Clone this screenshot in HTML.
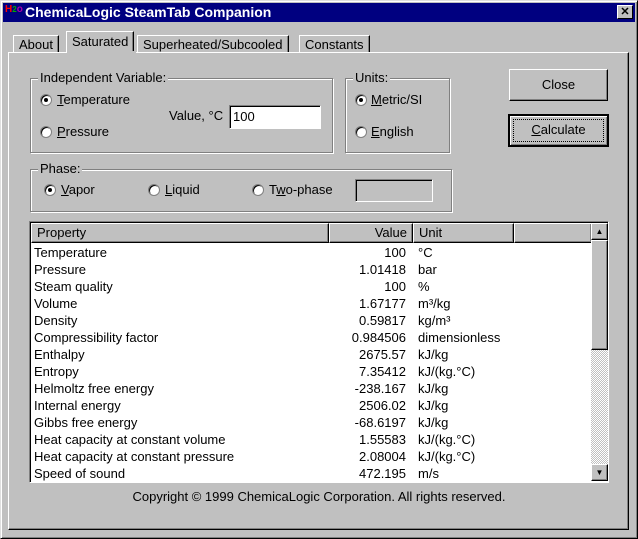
<!DOCTYPE html><html><head><style>
*{box-sizing:border-box}
body{margin:0;width:638px;height:539px;background:#c0c0c0;font-family:"Liberation Sans",sans-serif;font-size:13px;color:#000;position:relative;overflow:hidden}
.a{position:absolute}
.win{left:0;top:0;width:638px;height:539px;border:1px solid;border-color:#dfdfdf #000 #000 #dfdfdf;box-shadow:inset 1px 1px #fff,inset -1px -1px #808080}
.title{left:3px;top:3px;width:632px;height:19px;background:#000080;color:#fff;font-weight:bold;font-size:14px;line-height:19px;padding-left:22px}
.xb{right:5px;top:5px;width:16px;height:14px;background:#c0c0c0;border:1px solid;border-color:#fff #000 #000 #fff;font-size:11px;color:#000;line-height:12px;text-align:center;font-weight:bold}
.panel{left:8px;top:52px;width:621px;height:478px;border:1px solid;border-color:#fff #000 #000 #fff;box-shadow:inset -1px -1px #808080}
.tab{top:34px;height:19px;border:1px solid;border-bottom:none;border-color:#fff #000 #000 #fff;box-shadow:inset -1px 0 #808080;padding:0 5px;line-height:17px;background:#c0c0c0}
.grp{border:1px solid #808080;box-shadow:1px 1px #fff,inset 1px 1px #fff}
.lg{background:#c0c0c0;padding:0 2px;top:-9px;left:7px;line-height:16px}
.r{width:12px;height:12px;border-radius:50%;background:#fff;border:1px solid #808080;box-shadow:inset 1px 1px #000}
.r.on::after{content:"";position:absolute;left:3px;top:3px;width:4px;height:4px;border-radius:50%;background:#000}
.btn{border:1px solid;border-color:#fff #000 #000 #fff;box-shadow:inset -1px -1px #808080;text-align:center;line-height:29px}
.sunk{border:1px solid;border-color:#808080 #fff #fff #808080;box-shadow:inset 1px 1px #000}
u{text-decoration:underline}
.row{position:absolute;left:0;height:17px;line-height:17px;width:560px}
.row span{position:absolute}
.hd{top:0;height:20px;border:1px solid;border-color:#fff #000 #000 #fff;box-shadow:inset -1px -1px #808080;line-height:18px;padding:0 5px;background:#c0c0c0}
</style></head><body>
<div class="a win"></div>
<div class="a title">ChemicaLogic SteamTab Companion</div>
<div class="a" style="left:5px;top:5px;font-size:10px;color:#f00;font-weight:bold;line-height:10px">H<span style="color:#0a0;font-size:8px">2</span><span style="color:#a0a">o</span></div>
<div class="a xb">✕</div>
<div class="a panel"></div>
<div class="a tab" style="left:13px;top:35px;height:17px">About</div>
<div class="a tab" style="left:66px;top:31px;height:22px;border-bottom:none;z-index:2;line-height:20px">Saturated</div>
<div class="a" style="left:67px;top:51px;width:69px;height:3px;background:#c0c0c0;z-index:3"></div>
<div class="a tab" style="left:137px;top:35px;height:17px">Superheated/Subcooled</div>
<div class="a tab" style="left:299px;top:35px;height:17px">Constants</div>

<div class="a grp" style="left:30px;top:78px;width:303px;height:75px"><div class="a lg">Independent Variable:</div></div>
<div class="a r on" style="left:40px;top:94px"></div><div class="a" style="left:57px;top:92px"><u>T</u>emperature</div>
<div class="a r" style="left:40px;top:126px"></div><div class="a" style="left:57px;top:124px"><u>P</u>ressure</div>
<div class="a" style="left:169px;top:108px">Value, °C</div>
<div class="a sunk" style="left:229px;top:105px;width:92px;height:24px;background:#fff;padding:2px 3px;line-height:18px">100</div>

<div class="a grp" style="left:345px;top:78px;width:105px;height:75px"><div class="a lg" style="left:7px">Units:</div></div>
<div class="a r on" style="left:355px;top:94px"></div><div class="a" style="left:371px;top:92px"><u>M</u>etric/SI</div>
<div class="a r" style="left:355px;top:126px"></div><div class="a" style="left:371px;top:124px"><u>E</u>nglish</div>

<div class="a btn" style="left:509px;top:69px;width:99px;height:32px">Close</div>
<div class="a btn" style="left:508px;top:114px;width:101px;height:33px;border:2px solid #000;box-shadow:inset 1px 1px #fff,inset -1px -1px #808080;line-height:28px"><div class="a" style="left:3px;top:3px;right:3px;bottom:3px;border:1px dotted #000"></div><u>C</u>alculate</div>

<div class="a grp" style="left:30px;top:169px;width:422px;height:43px"><div class="a lg">Phase:</div></div>
<div class="a r on" style="left:44px;top:184px"></div><div class="a" style="left:61px;top:182px"><u>V</u>apor</div>
<div class="a r" style="left:148px;top:184px"></div><div class="a" style="left:165px;top:182px"><u>L</u>iquid</div>
<div class="a r" style="left:252px;top:184px"></div><div class="a" style="left:269px;top:182px">T<u>w</u>o-phase</div>
<div class="a sunk" style="left:355px;top:179px;width:78px;height:23px"></div>

<div class="a sunk" style="left:29px;top:221px;width:580px;height:262px;background:#fff;overflow:hidden">
<div class="a hd" style="left:1px;top:1px;width:298px">Property</div>
<div class="a hd" style="left:299px;top:1px;width:84px;text-align:right">Value</div>
<div class="a hd" style="left:383px;top:1px;width:101px">Unit</div>
<div class="a hd" style="left:484px;top:1px;width:78px"></div>
<div class="a" style="left:561px;top:1px;width:17px;height:258px;background:repeating-conic-gradient(#c0c0c0 0 25%,#fff 0 50%) 0 0/2px 2px"></div>
<div class="a btn" style="left:561px;top:1px;width:17px;height:17px;background:#c0c0c0;font-size:8px;line-height:15px">▲</div>
<div class="a btn" style="left:561px;top:18px;width:17px;height:110px;background:#c0c0c0"></div>
<div class="a btn" style="left:561px;top:242px;width:17px;height:17px;background:#c0c0c0;font-size:8px;line-height:15px">▼</div>
<div class="a" style="left:0;top:22px;width:560px">
<div class="row" style="top:0"><span style="left:4px">Temperature</span><span style="right:184px">100</span><span style="left:388px">°C</span></div>
<div class="row" style="top:17px"><span style="left:4px">Pressure</span><span style="right:184px">1.01418</span><span style="left:388px">bar</span></div>
<div class="row" style="top:34px"><span style="left:4px">Steam quality</span><span style="right:184px">100</span><span style="left:388px">%</span></div>
<div class="row" style="top:51px"><span style="left:4px">Volume</span><span style="right:184px">1.67177</span><span style="left:388px">m³/kg</span></div>
<div class="row" style="top:68px"><span style="left:4px">Density</span><span style="right:184px">0.59817</span><span style="left:388px">kg/m³</span></div>
<div class="row" style="top:85px"><span style="left:4px">Compressibility factor</span><span style="right:184px">0.984506</span><span style="left:388px">dimensionless</span></div>
<div class="row" style="top:102px"><span style="left:4px">Enthalpy</span><span style="right:184px">2675.57</span><span style="left:388px">kJ/kg</span></div>
<div class="row" style="top:119px"><span style="left:4px">Entropy</span><span style="right:184px">7.35412</span><span style="left:388px">kJ/(kg.°C)</span></div>
<div class="row" style="top:136px"><span style="left:4px">Helmoltz free energy</span><span style="right:184px">-238.167</span><span style="left:388px">kJ/kg</span></div>
<div class="row" style="top:153px"><span style="left:4px">Internal energy</span><span style="right:184px">2506.02</span><span style="left:388px">kJ/kg</span></div>
<div class="row" style="top:170px"><span style="left:4px">Gibbs free energy</span><span style="right:184px">-68.6197</span><span style="left:388px">kJ/kg</span></div>
<div class="row" style="top:187px"><span style="left:4px">Heat capacity at constant volume</span><span style="right:184px">1.55583</span><span style="left:388px">kJ/(kg.°C)</span></div>
<div class="row" style="top:204px"><span style="left:4px">Heat capacity at constant pressure</span><span style="right:184px">2.08004</span><span style="left:388px">kJ/(kg.°C)</span></div>
<div class="row" style="top:221px"><span style="left:4px">Speed of sound</span><span style="right:184px">472.195</span><span style="left:388px">m/s</span></div>
</div></div>
<div class="a" style="left:0;width:638px;top:489px;text-align:center">Copyright © 1999 ChemicaLogic Corporation. All rights reserved.</div>
</body></html>
